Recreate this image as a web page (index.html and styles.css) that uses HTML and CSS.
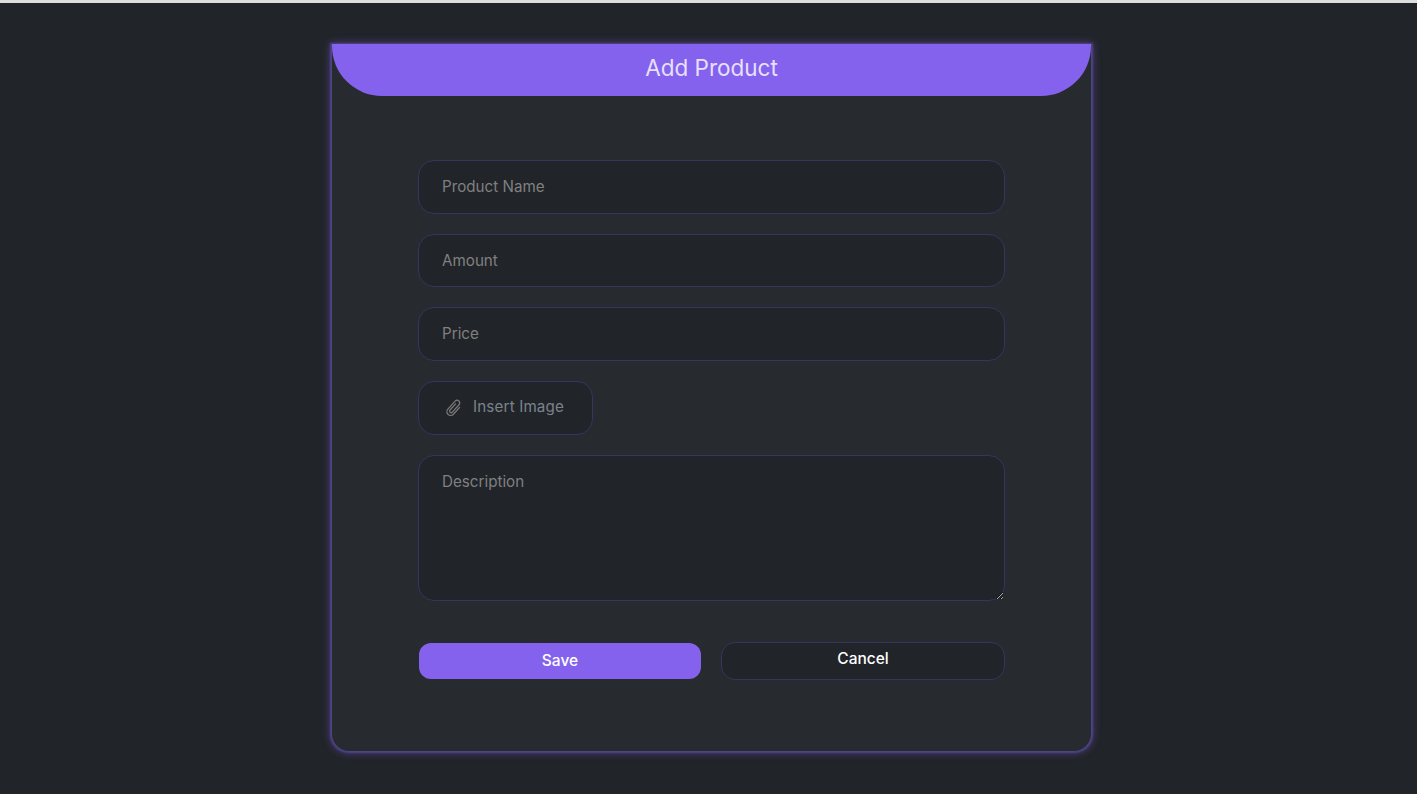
FILE: index.html
```html
<!DOCTYPE html>
<html lang="en">
<head>
    <meta charset="UTF-8">
    <meta name="viewport" content="width=device-width, initial-scale=1.0">
    <title>Add Product</title>
    <link rel="stylesheet" href="styles.css">
</head>
<body>

    <div class="top-strip"></div>

    <div class="product-card">
        <h1 class="card-title">Add Product</h1>

        <form class="product-form">
            <input class="field" type="text" placeholder="Product Name">
            <input class="field" type="text" placeholder="Amount">
            <input class="field" type="text" placeholder="Price">

            <label class="file-button">
                <svg class="clip-icon" viewBox="0 0 24 24" width="20" height="20" fill="none" stroke="currentColor" stroke-width="1.5" stroke-linecap="round" stroke-linejoin="round">
                    <path transform="rotate(42 12 12)" d="M16.5 7v11a4.5 4.5 0 0 1-9 0V5a3.2 3.2 0 0 1 6.4 0v12a1.9 1.9 0 0 1-3.8 0V7"/>
                </svg>
                <span>Insert Image</span>
            </label>

            <textarea class="field field-area" placeholder="Description"></textarea>

            <div class="form-actions">
                <button class="btn btn-save" type="button">Save</button>
                <button class="btn btn-cancel" type="button">Cancel</button>
            </div>
        </form>
    </div>

</body>
</html>
```

FILE: styles.css
```css
* {
    box-sizing: border-box;
}

body {
    margin: 0;
    height: 794px;
    overflow: hidden;
    background-color: #212429;
    font-family: 'Inter', 'Liberation Sans', sans-serif;
}

.top-strip {
    height: 3px;
    background-color: #dedede;
}

.product-card {
    width: 761px;
    height: 708px;
    margin: 41px 0 0 331px;
    background-color: #272a2e;
    border: 1px solid #4d4385;
    border-top: none;
    border-radius: 0 0 18px 18px;
    box-shadow: 0 0 2px 1px rgba(90, 75, 160, 0.7), 0 0 8px 1px rgba(132, 98, 238, 0.4);
}

.card-title {
    height: 52px;
    margin: 0;
    background-color: #8462ee;
    border-radius: 0 0 50px 50px;
    color: #e6e0fb;
    font-size: 22.5px;
    font-weight: 400;
    line-height: 47px;
    text-align: center;
}

.product-form {
    display: flex;
    flex-direction: column;
    gap: 20px;
    width: 587px;
    margin: 64px 0 0 86px;
}

.field {
    display: block;
    width: 100%;
    height: 53.7px;
    padding: 0 23px 1px;
    background-color: #212429;
    border: 1px solid #393360;
    border-radius: 16px;
    color: #fff;
    font-family: inherit;
    font-size: 15.2px;
    outline: none;
}

.field::placeholder {
    color: #808080;
    opacity: 1;
}

.field-area {
    height: 146px;
    padding: 16px 23px;
}

.file-button {
    display: flex;
    align-items: center;
    gap: 9px;
    width: 175px;
    height: 53.7px;
    padding: 0 0 0 25px;
    background-color: #212429;
    border: 1px solid #393360;
    border-radius: 16px;
    color: #7c838a;
    font-size: 15.2px;
    letter-spacing: 0.15px;
}

.file-button span {
    padding-bottom: 3px;
}

.clip-icon {
    color: #7b7b7b;
    flex-shrink: 0;
}

.form-actions {
    display: flex;
    align-items: center;
    gap: 20px;
    margin-top: 21px;
}

.btn {
    height: 38px;
    font-family: inherit;
    font-size: 15.5px;
    font-weight: 450;
    color: #fff;
    cursor: pointer;
}

.btn-save {
    width: 282px;
    height: 36px;
    margin-left: 1px;
    padding-bottom: 1px;
    background-color: #8462ee;
    border: none;
    border-radius: 12px;
}

.btn-cancel {
    width: 284px;
    padding-bottom: 6px;
    background-color: #212429;
    border: 1px solid #393360;
    border-radius: 14px;
}
```
